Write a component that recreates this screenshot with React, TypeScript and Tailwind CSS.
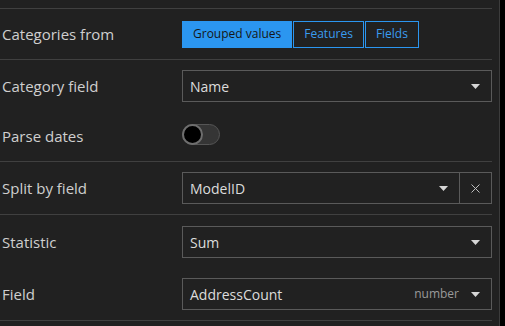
import React from 'react';

const Caret = () => (
  <svg width="9" height="5" viewBox="0 0 9 5" className="shrink-0">
    <path d="M0 0 H9 L4.5 5 Z" fill="#d6d6d6" />
  </svg>
);

const Divider = () => <div className="h-px bg-[#404040]" />;

const Label = ({ children, className = '' }: { children: React.ReactNode; className?: string }) => (
  <div className={`w-[182px] shrink-0 pl-[2px] text-[15px] text-[#cfcfcf] ${className}`}>{children}</div>
);

const Select = ({ value, hint }: { value: string; hint?: string }) => (
  <div className="flex h-[32px] flex-1 items-center border border-[#5a5a5a] pl-[7px] pr-[11px]">
    <span className="flex-1 text-[14px] text-[#dcdcdc]">{value}</span>
    {hint && <span className="mr-[12px] text-[12px] text-[#9a9a9a]">{hint}</span>}
    <Caret />
  </div>
);

export default function App() {
  const [mode, setMode] = React.useState('Grouped values');
  const [parseDates, setParseDates] = React.useState(false);

  return (
    <div className="flex h-[326px] w-[505px] bg-[#212121]" style={{ fontFamily: '"Open Sans", "Noto Sans", sans-serif' }}>
      <div className="w-[492px] shrink-0">
        <div className="h-[8px]" />
        <Divider />

        <div className="flex h-[50px] items-center">
          <Label>Categories from</Label>
          <div className="flex gap-[1px]">
            {['Grouped values', 'Features', 'Fields'].map((m) => (
              <button
                key={m}
                onClick={() => setMode(m)}
                className={
                  mode === m
                    ? 'h-[27px] border border-[#2b96f0] bg-[#2b96f0] px-[10px] text-[12px] text-[#161616]'
                    : 'h-[27px] border border-[#2b96f0] px-[10px] text-[12px] text-[#3a9cf0]'
                }
              >
                {m}
              </button>
            ))}
          </div>
        </div>
        <Divider />

        <div className="pt-[10px] pb-[16px]">
          <div className="flex items-center">
            <Label>Category field</Label>
            <Select value="Name" />
          </div>
          <div className="mt-[22px] flex h-[21px] items-center">
            <Label className="pt-[4px]">Parse dates</Label>
            <button
              onClick={() => setParseDates(!parseDates)}
              className="relative h-[21px] w-[38px] rounded-full border border-[#555] bg-[#353535]"
            >
              <span
                className={
                  parseDates
                    ? 'absolute top-[-1px] right-[-1px] h-[21px] w-[21px] rounded-full border-2 border-[#2b96f0] bg-white'
                    : 'absolute top-[-1px] left-[-1px] h-[21px] w-[21px] rounded-full border-2 border-[#6e6e6e] bg-black'
                }
              />
            </button>
          </div>
        </div>
        <Divider />

        <div className="flex items-center pt-[10px] pb-[10px]">
          <Label>Split by field</Label>
          <Select value="ModelID" />
          <div className="flex h-[32px] w-[32px] items-center justify-center border border-l-0 border-[#5a5a5a]">
            <svg width="9" height="9" viewBox="0 0 9 9">
              <path d="M0.5 0.5 L8.5 8.5 M8.5 0.5 L0.5 8.5" stroke="#bdbdbd" strokeWidth="1" />
            </svg>
          </div>
        </div>
        <Divider />

        <div className="pt-[11px] pb-[10px]">
          <div className="flex items-center">
            <Label>Statistic</Label>
            <Select value="Sum" />
          </div>
          <div className="mt-[20px] flex items-center">
            <Label>Field</Label>
            <Select value="AddressCount" hint="number" />
          </div>
        </div>
        <Divider />
      </div>
      <div className="w-[7px] shrink-0" />
      <div className="w-px shrink-0 bg-[#3c3c3c]" />
      <div className="flex-1 bg-black" />
    </div>
  );
}
